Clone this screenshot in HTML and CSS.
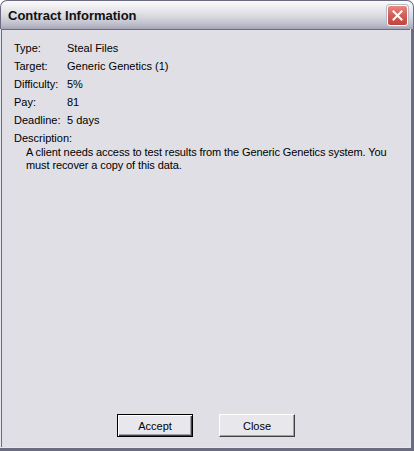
FILE: index.html
```html
<!DOCTYPE html>
<html lang="en">
<head>
  <meta charset="UTF-8" />
  <title>Contract Information</title>
  <link rel="stylesheet" href="styles.css">
</head>
<body>

  <div class="window">
    <div class="titlebar">
      <span class="title">Contract Information</span>
      <button class="close-btn" aria-label="Close">
        <svg width="11" height="11" viewBox="0 0 11 11">
          <path d="M1.5 1.5 L9.5 9.5 M9.5 1.5 L1.5 9.5" stroke="#fff" stroke-width="2" stroke-linecap="square" fill="none"/>
        </svg>
      </button>
    </div>

    <div class="frame">
      <div class="client">
        <div class="details">
          <div class="row"><span class="label">Type:</span><span class="value">Steal Files</span></div>
          <div class="row"><span class="label">Target:</span><span class="value">Generic Genetics (1)</span></div>
          <div class="row"><span class="label">Difficulty:</span><span class="value">5%</span></div>
          <div class="row"><span class="label">Pay:</span><span class="value">81</span></div>
          <div class="row"><span class="label">Deadline:</span><span class="value">5 days</span></div>
          <div class="row"><span class="label">Description:</span></div>
          <div class="desc">
            A client needs access to test results from the Generic Genetics system. You must recover a copy of this data.
          </div>
        </div>

        <div class="buttons">
          <button class="btn default">Accept</button>
          <button class="btn">Close</button>
        </div>
      </div>
    </div>
  </div>

</body>
</html>
```

FILE: styles.css
```css
body {
  margin: 0;
  padding: 0;
  background-color: #ffffff;
  font-family: 'Liberation Sans', Arial, sans-serif;
  font-size: 11px;
  color: #000;
}

.window {
  width: 414px;
  height: 451px;
  box-sizing: border-box;
  background-color: #6c6c80;
  border-radius: 7px 7px 0 0;
  display: flex;
  flex-direction: column;
  overflow: hidden;
}

.titlebar {
  height: 28px;
  flex: none;
  display: flex;
  align-items: center;
  justify-content: space-between;
  padding: 0 5px 0 7px;
  margin: 1px 1px 0 1px;
  border-radius: 6px 6px 0 0;
  background: linear-gradient(to bottom, #fbfbfd 0%, #ececf0 25%, #d8d8e0 55%, #c2c2ce 80%, #a4a4b6 100%);
}

.title {
  font-size: 13px;
  font-weight: bold;
  color: #101010;
  padding-top: 1px;
}

.close-btn {
  width: 21px;
  height: 21px;
  padding: 0;
  margin-top: 1px;
  border: 1px solid #ffffff;
  border-radius: 3px;
  background: linear-gradient(to bottom, #e88a80 0%, #d4605a 45%, #c0443f 100%);
  box-shadow: 0 0 0 1px #b8b8c6;
  display: flex;
  align-items: center;
  justify-content: center;
}

.frame {
  flex: 1;
  display: flex;
  margin: 0 3px 3px 0;
  border-left: 1px solid #e6e6ee;
  border-right: 1px solid #e6e6ee;
  border-bottom: 1px solid #e6e6ee;
}

.client {
  flex: 1;
  display: flex;
  flex-direction: column;
  background-color: #dfdfe5;
  border-left: 1px solid #6c6c80;
  border-top: 1px solid #6c6c80;
}

.details {
  flex: 1;
  padding: 9px 2px 0 12px;
}

.row {
  display: flex;
  line-height: 18px;
}

.label {
  width: 53px;
}

.desc {
  margin: -1px 0 0 12px;
  line-height: 13px;
  letter-spacing: -0.1px;
}

.buttons {
  display: flex;
  justify-content: center;
  gap: 26px;
  padding-bottom: 10px;
}

.btn {
  width: 76px;
  height: 23px;
  padding: 0;
  font-family: 'Liberation Sans', Arial, sans-serif;
  font-size: 11px;
  color: #000;
  background-color: #e8e8ec;
  border: 1px solid;
  border-color: #ffffff #404040 #404040 #ffffff;
  box-shadow: inset -1px -1px 0 #a0a0a8;
}

.btn.default {
  outline: 1px solid #000;
  outline-offset: -1px;
  border-color: #000;
  box-shadow: inset 1px 1px 0 #ffffff, inset -1px -1px 0 #404040, inset -2px -2px 0 #a0a0a8;
}
```
